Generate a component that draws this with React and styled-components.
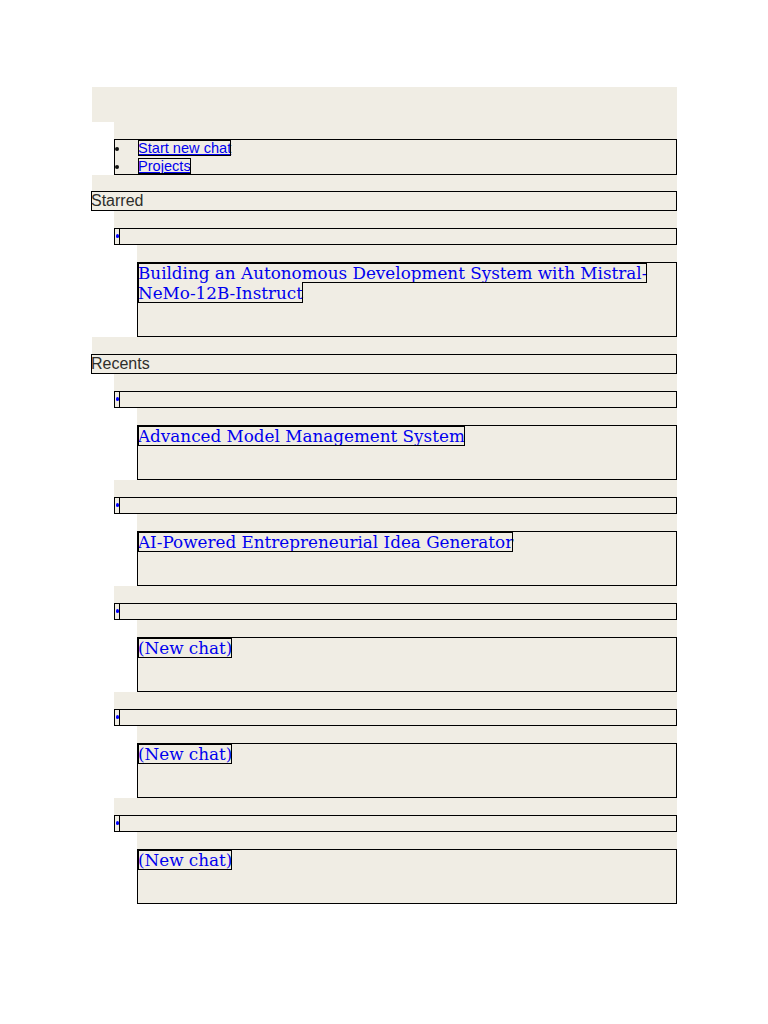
import React from 'react'
import styled, { createGlobalStyle } from 'styled-components'

const GlobalStyle = createGlobalStyle`
  body {
    margin: 0;
    background: #fff;
    font-family: "DejaVu Serif", serif;
  }
`

const beige = '#f0ede4'

const Sidebar = styled.nav`
  width: 585px;
  margin: 87px 0 0 92px;
`

const Header = styled.div`
  height: 35px;
  background: ${beige};
`

const NavBlock = styled.div`
  margin-left: 22px;
  padding-top: 17px;
  background: ${beige};
`

const NavList = styled.ul`
  margin: 0;
  padding: 0;
  list-style: none;
  outline: 1px solid #000;
  outline-offset: -1px;
  font-family: "Liberation Sans", Arial, sans-serif;
  font-size: 14.6px;
`

const NavItem = styled.li`
  display: flex;
  align-items: center;
  height: 17.75px;
`

const Bullet = styled.span`
  width: 4px;
  height: 4px;
  margin: 2px 19.5px 0 0.5px;
  border-radius: 50%;
  background: #111;
  flex-shrink: 0;
`

const NavLink = styled.a`
  color: #0000ee;
  text-decoration: underline;
  outline: 1px solid #000;
  outline-offset: -1px;
  cursor: pointer;
`

const TitleWrap = styled.div`
  padding-top: ${(p) => p.$gap}px;
  background: ${beige};
`

const SectionTitle = styled.h3`
  margin: 0 0 0 -1px;
  height: 20px;
  line-height: 20px;
  font-family: "Liberation Sans", Arial, sans-serif;
  font-size: 16px;
  font-weight: normal;
  color: #2e2e2b;
  outline: 1px solid #000;
  outline-offset: -1px;
`

const ChatList = styled.ul`
  margin: 0;
  padding: 0;
  list-style: none;
`

const RowWrap = styled.div`
  margin-left: 22px;
  padding-top: 16.5px;
  background: ${beige};
`

const Row = styled.div`
  display: flex;
  height: 17.5px;
  outline: 1px solid #000;
  outline-offset: -1px;
`

const DotLink = styled.a`
  display: flex;
  align-items: center;
  width: 6px;
  padding-left: 2px;
  box-sizing: border-box;
  outline: 1.5px solid #000;
  outline-offset: -1.5px;
`

const Dot = styled.span`
  width: 3px;
  height: 4px;
  border-radius: 1.5px;
  background: #0000ff;
`

const BodyWrap = styled.div`
  margin-left: 45px;
  padding-top: 17px;
  background: ${beige};
`

const Body = styled.div`
  padding: 1px 0 34px 1px;
  line-height: 20px;
  font-size: 16.8px;
  outline: 1px solid #000;
  outline-offset: -1px;
`

const ChatLink = styled.a`
  color: #0000ee;
  text-decoration: none;
  font-family: "DejaVu Serif", serif;
  outline: 1px solid #000;
  outline-offset: -1px;
  cursor: pointer;
`

const starred = [
  'Building an Autonomous Development System with Mistral-NeMo-12B-Instruct',
]

const recents = [
  'Advanced Model Management System',
  'AI-Powered Entrepreneurial Idea Generator',
  '(New chat)',
  '(New chat)',
  '(New chat)',
]

const ChatEntry = ({ title }) => (
  <li>
    <RowWrap>
      <Row>
        <DotLink>
          <Dot />
        </DotLink>
      </Row>
    </RowWrap>
    <BodyWrap>
      <Body>
        <ChatLink>{title}</ChatLink>
      </Body>
    </BodyWrap>
  </li>
)

const Section = ({ title, chats, gap }) => (
  <section>
    <TitleWrap $gap={gap}>
      <SectionTitle>{title}</SectionTitle>
    </TitleWrap>
    <ChatList>
      {chats.map((c, i) => (
        <ChatEntry key={i} title={c} />
      ))}
    </ChatList>
  </section>
)

export default function App() {
  return (
    <>
      <GlobalStyle />
      <Sidebar>
        <Header />
        <NavBlock>
          <NavList>
            <NavItem>
              <Bullet />
              <NavLink>Start new chat</NavLink>
            </NavItem>
            <NavItem>
              <Bullet />
              <NavLink>Projects</NavLink>
            </NavItem>
          </NavList>
        </NavBlock>
        <Section title="Starred" chats={starred} gap={16.5} />
        <Section title="Recents" chats={recents} gap={17} />
      </Sidebar>
    </>
  )
}
